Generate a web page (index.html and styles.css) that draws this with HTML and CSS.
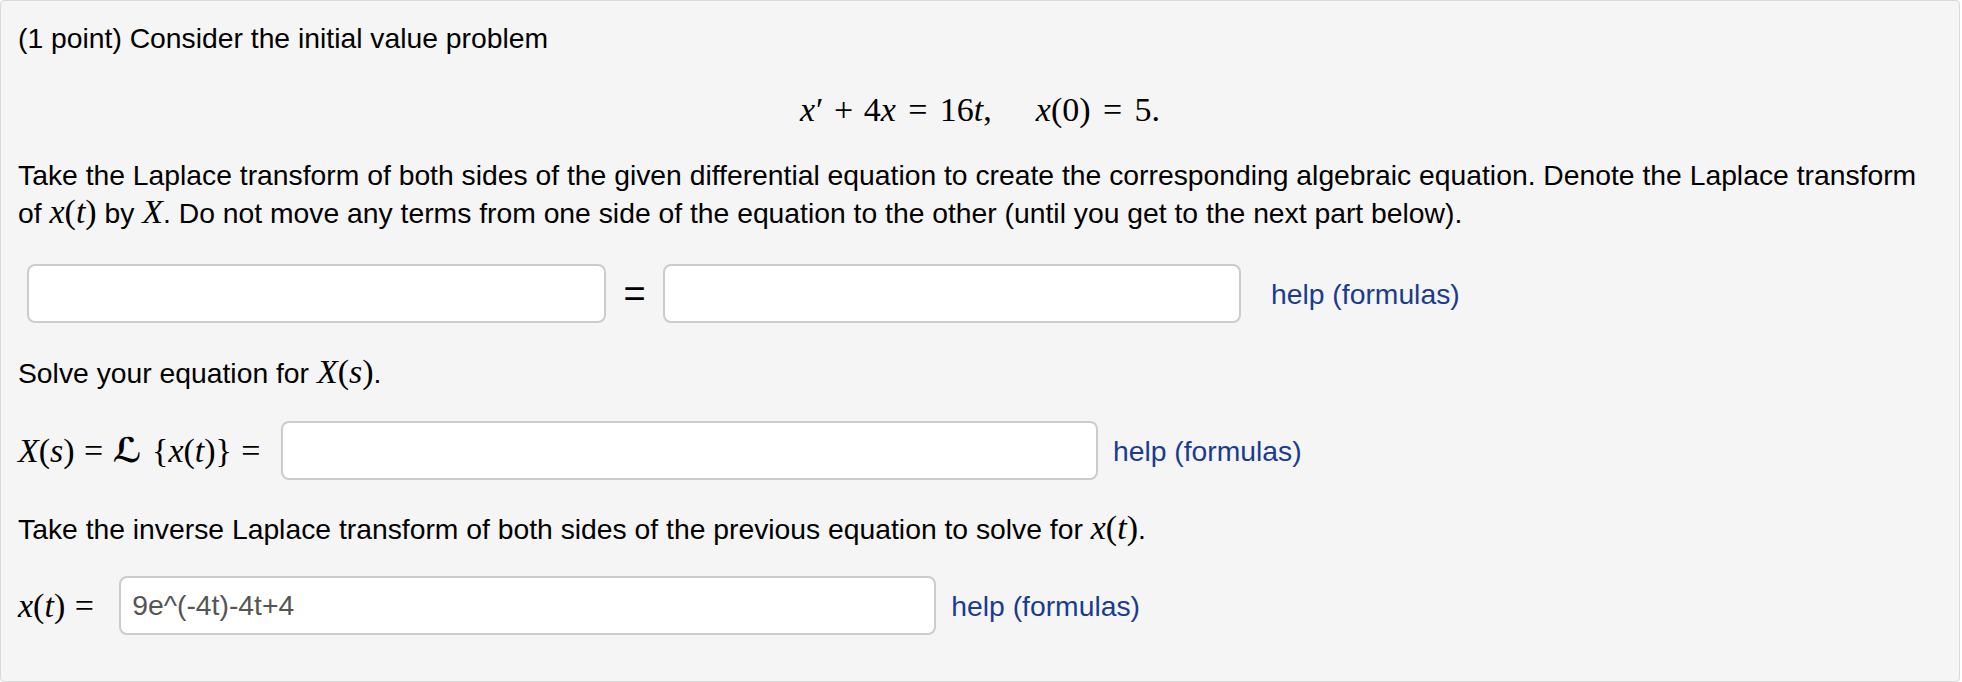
FILE: index.html
```html
<!DOCTYPE html>
<html lang="en">
<head>
<meta charset="utf-8">
<title>Initial value problem</title>
<link rel="stylesheet" href="styles.css">
</head>
<body>
<div class="problem">
  <p class="lead">(1 point) Consider the initial value problem</p>
  <div class="display"><span class="math"><i>x</i><span class="prime">′</span><span class="bin">+</span>4<i>x</i><span class="rel">=</span>16<i>t</i>,<span class="qq"></span><i>x</i>(0)<span class="rel">=</span>5.</span></div>
  <p class="text">Take the Laplace transform of both sides of the given differential equation to create the corresponding algebraic equation. Denote the Laplace transform<br>of <span class="math"><i>x</i>(<i>t</i>)</span> by <span class="math"><i>X</i></span>. Do not move any terms from one side of the equation to the other (until you get to the next part below).</p>
  <div class="row row-first">
    <input class="ans ans-half ans-left" type="text">
    <span class="eq-sign">=</span>
    <input class="ans ans-half ans-right" type="text">
    <a class="help help-first" href="#">help (formulas)</a>
  </div>
  <p class="text gap-solve">Solve your equation for <span class="math"><i>X</i>(<i>s</i>)</span>.</p>
  <div class="row row-mid">
    <span class="math label"><i>X</i>(<i>s</i>)<span class="rel">=</span><span class="cal">ℒ</span><span class="brace">{</span><i>x</i>(<i>t</i>)<span class="brace">}</span><span class="rel">=</span></span>
    <input class="ans ans-wide ans-xs" type="text">
    <a class="help" href="#">help (formulas)</a>
  </div>
  <p class="text gap-take">Take the inverse Laplace transform of both sides of the previous equation to solve for <span class="math"><i>x</i>(<i>t</i>)</span>.</p>
  <div class="row row-last">
    <span class="math label"><i>x</i>(<i>t</i>)<span class="rel">=</span></span>
    <input class="ans ans-wide ans-xt" type="text" value="9e^(-4t)-4t+4">
    <a class="help" href="#">help (formulas)</a>
  </div>
</div>
</body>
</html>
```
FILE: styles.css
```css
html, body {
  margin: 0;
  padding: 0;
  background: #ffffff;
}

.problem {
  box-sizing: border-box;
  width: 1960px;
  border: 1px solid #d9d9d9;
  border-radius: 4px;
  background: #f5f5f5;
  padding: 18px 17px 46px 17px;
  font-family: "Liberation Sans", Arial, sans-serif;
  font-size: 28.3px;
  line-height: 38px;
  color: #000000;
}

p {
  margin: 0;
}

.lead {
  margin: 0;
}

.display {
  margin-top: 35px;
  height: 38px;
  text-align: center;
}

.math {
  font-family: "Liberation Serif", "Times New Roman", "DejaVu Serif", serif;
  font-size: 34px;
  line-height: 1;
  white-space: nowrap;
}

.math i {
  font-style: italic;
}

.prime {
  margin-left: 1px;
}

.bin {
  margin: 0 0.222em;
}

.rel {
  margin: 0 0.278em;
}

.display .bin {
  margin: 0 calc(0.222em + 3px);
}

.display .rel {
  margin: 0 calc(0.278em + 3px);
}

.qq {
  display: inline-block;
  width: 44px;
}

.cal {
  font-family: "DejaVu Serif", "DejaVu Sans", serif;
  font-style: italic;
  font-weight: bold;
  margin-right: 0.3em;
}

.brace {
  font-style: normal;
}

.text {
  margin-top: 26px;
}

.gap-solve {
  margin-top: 31px;
}

.gap-take {
  margin-top: 30px;
}

.row {
  display: flex;
  align-items: center;
  margin-top: 29px;
}

.row-first {
  margin-top: 32px;
}

.row-last {
  margin-top: 28px;
}

.ans {
  box-sizing: border-box;
  height: 59px;
  border: 2px solid #cccccc;
  border-radius: 8px;
  background: #ffffff;
  font-family: "Liberation Sans", Arial, sans-serif;
  font-size: 28.3px;
  color: #555555;
  padding: 0 11px;
  margin: 0;
  outline: none;
}

.ans-half {
  width: 579px;
}

.ans-left {
  margin-left: 9px;
}

.ans-right {
  width: 578px;
}

.eq-sign {
  display: inline-block;
  width: 57px;
  text-align: center;
  font-size: 38px;
  line-height: 1;
}

.ans-wide {
  width: 817px;
}

.ans-xs {
  margin-left: 11px;
}

.ans-xt {
  margin-left: 16px;
}

.label {
  line-height: 38px;
}

.help {
  color: #1b3b8e;
  text-decoration: none;
  margin-left: 15px;
  line-height: 38px;
}

.help-first {
  margin-left: 30px;
}
```
